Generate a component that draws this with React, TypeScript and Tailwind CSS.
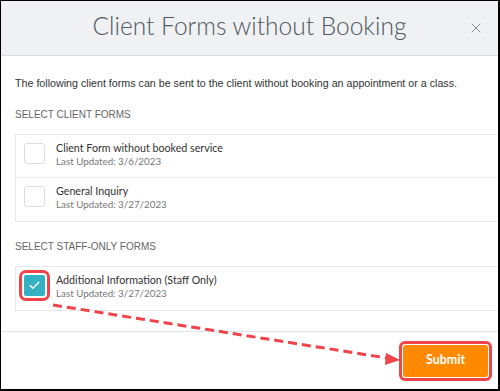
import { X, Check } from "lucide-react";

type Form = { id: string; name: string; updated: string; checked?: boolean };

const clientForms: Form[] = [
    { id: "f1", name: "Client Form without booked service", updated: "3/6/2023" },
    { id: "f2", name: "General Inquiry", updated: "3/27/2023" },
];

const staffForms: Form[] = [
    { id: "f3", name: "Additional Information (Staff Only)", updated: "3/27/2023", checked: true },
];

const FormRow = ({ form, last }: { form: Form; last: boolean }) => (
    <div className={`flex items-start h-[43px] pl-2 pt-2 ${last ? "" : "border-b border-[#ececec]"}`}>
        {form.checked ? (
            <div className="flex h-[21px] w-[21px] shrink-0 items-center justify-center rounded-[2px] bg-[#35b1c4] outline-[3px] outline-solid outline-offset-2 outline-[#f0434a]">
                <Check className="h-[13px] w-[13px] text-white" strokeWidth={2.5} />
            </div>
        ) : (
            <div className="h-[21px] w-[21px] shrink-0 rounded-[3px] border border-[#dddddd] bg-white" />
        )}
        <div className="ml-[11px] -mt-[2px] font-['Lato',sans-serif]">
            <p className="text-[10.7px] leading-[14px] text-[#333]">{form.name}</p>
            <p className="text-[9.8px] leading-[12px] text-[#777]">Last Updated: {form.updated}</p>
        </div>
    </div>
);

const Section = ({ label, forms }: { label: string; forms: Form[] }) => (
    <div>
        <div className="text-[10px] leading-[12px] uppercase text-[#666] font-['Liberation_Sans',Arial,sans-serif]">
            {label}
        </div>
        <div className="mt-[13px] border border-r-0 border-[#e8e8e8] bg-white">
            {forms.map((form, i) => (
                <FormRow key={form.id} form={form} last={i === forms.length - 1} />
            ))}
        </div>
    </div>
);

export default function App() {
    return (
        <div className="relative flex h-[391px] w-[500px] flex-col overflow-hidden border-l border-t border-r-2 border-b-2 border-black bg-white">
            <div className="grid h-[55px] shrink-0 grid-cols-[1fr_auto_1fr] items-center border-b border-[#dcdde0] bg-[#f0f1f3]">
                <div />
                <h1 className="font-['Lato',sans-serif] text-[24.5px] font-light text-[#4f5760] leading-none pb-[3px]">
                    Client Forms without Booking
                </h1>
                <div className="flex justify-end pr-[14px]">
                    <X className="h-[16px] w-[16px] text-[#8a8d92]" strokeWidth={1.5} />
                </div>
            </div>

            <div className="flex-1 pl-[14px] pt-[20px]">
                <p className="font-['Liberation_Sans',Arial,sans-serif] text-[10.7px] leading-[14px] text-[#333]">
                    The following client forms can be sent to the client without booking an appointment or a class.
                </p>
                <div className="mt-[19px]">
                    <Section label="Select Client Forms" forms={clientForms} />
                </div>
                <div className="mt-[19px]">
                    <Section label="Select Staff-Only Forms" forms={staffForms} />
                </div>
            </div>

            <div className="flex h-[58px] shrink-0 items-center justify-end border-t border-[#e2e3e6] pr-[6px]">
                <div className="rounded-[6px] border-[3px] border-[#f0434a] p-[1px]">
                    <button className="h-[32px] w-[85px] rounded-[3px] bg-[#ff8a00] font-['Lato',sans-serif] text-[12.5px] font-bold text-white">
                        Submit
                    </button>
                </div>
            </div>

            <svg className="pointer-events-none absolute left-0 top-0" width="500" height="391">
                <line x1="52" y1="304" x2="386" y2="357" stroke="#f0434a" strokeWidth="3" strokeDasharray="9 5" />
                <polygon points="399,359 385,352 384,364" fill="#f0434a" />
            </svg>
        </div>
    );
}
